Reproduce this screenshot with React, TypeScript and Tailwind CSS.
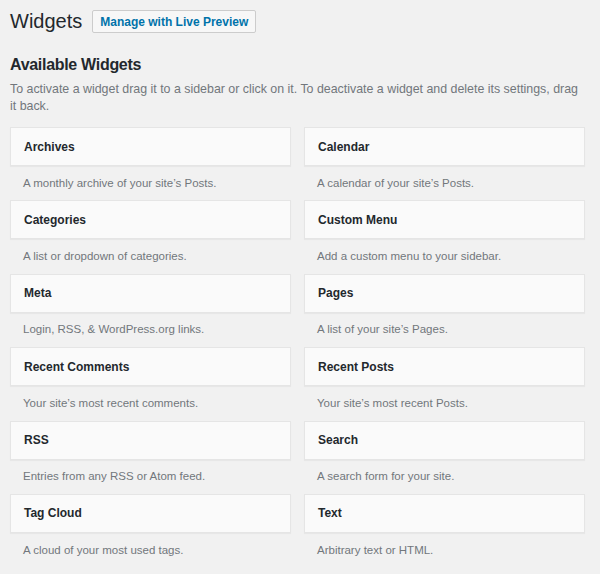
import React from "react";

const widgets = [
  ["Archives", "A monthly archive of your site\u2019s Posts."],
  ["Calendar", "A calendar of your site\u2019s Posts."],
  ["Categories", "A list or dropdown of categories."],
  ["Custom Menu", "Add a custom menu to your sidebar."],
  ["Meta", "Login, RSS, & WordPress.org links."],
  ["Pages", "A list of your site\u2019s Pages."],
  ["Recent Comments", "Your site\u2019s most recent comments."],
  ["Recent Posts", "Your site\u2019s most recent Posts."],
  ["RSS", "Entries from any RSS or Atom feed."],
  ["Search", "A search form for your site."],
  ["Tag Cloud", "A cloud of your most used tags."],
  ["Text", "Arbitrary text or HTML."],
];

function Widget({ title, desc }: { title: string; desc: string }) {
  return (
    <div>
      <div className="flex h-[39px] items-center border border-[#e5e5e5] bg-[#fafafa] px-[13px] shadow-[0_1px_1px_rgba(0,0,0,0.04)]">
        <h3 className="text-[12px] font-semibold text-[#23282d]">{title}</h3>
      </div>
      <p className="flex h-[34.4px] items-center px-[13px] text-[11.5px] text-[#72777c]">{desc}</p>
    </div>
  );
}

export default function App() {
  return (
    <div
      className="min-h-[574px] w-[600px] bg-[#f1f1f1] pl-[10px] pr-[15px] pt-[7px]"
      style={{ fontFamily: '"Liberation Sans", Arial, sans-serif' }}
    >
      <header className="flex items-center">
        <h1 className="text-[20px] leading-[29px] text-[#23282d]">Widgets</h1>
        <button className="ml-[10px] h-[23px] rounded-[2px] border border-[#cccccc] bg-[#f7f7f7] px-[7px] text-[12px] font-semibold text-[#0073aa]">
          Manage with Live Preview
        </button>
      </header>

      <h2 className="mt-[18px] text-[16px] font-semibold leading-[22px] tracking-[-0.3px] text-[#23282d]">
        Available Widgets
      </h2>
      <p className="mt-[5px] text-[12.4px] leading-[17px] text-[#72777c]">
        To activate a widget drag it to a sidebar or click on it. To deactivate a widget and delete its settings, drag
        it back.
      </p>

      <div className="mt-[12px] grid grid-cols-2 gap-x-[13px]">
        {widgets.map(([t, d]) => (
          <Widget key={t} title={t} desc={d} />
        ))}
      </div>
    </div>
  );
}
